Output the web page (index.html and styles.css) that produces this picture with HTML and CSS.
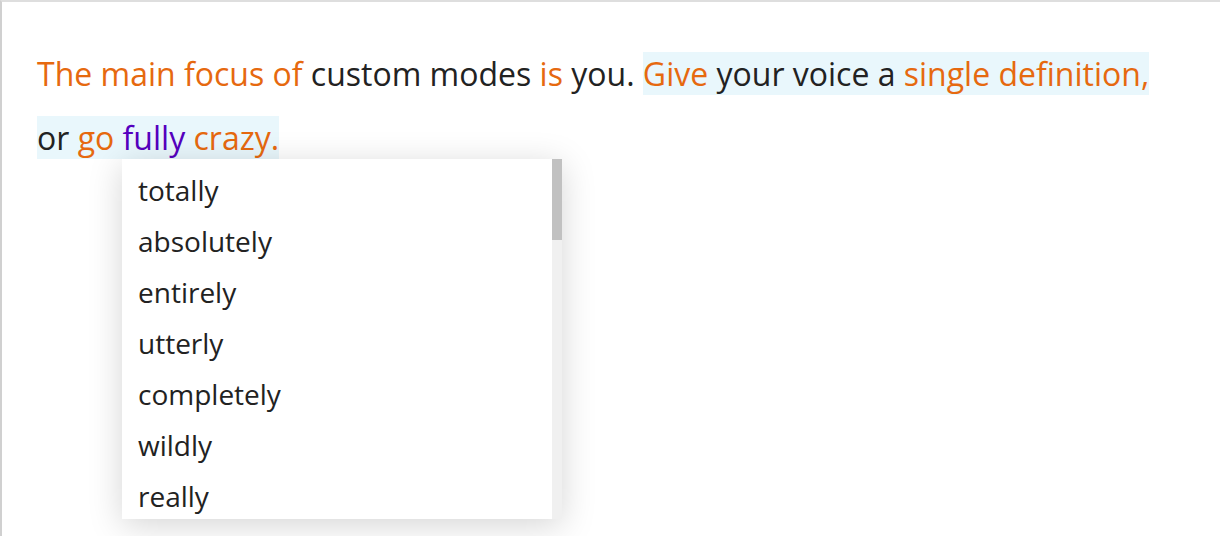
FILE: index.html
```html
<!DOCTYPE html>
<html lang="en">
<head>
<meta charset="utf-8">
<title>Custom modes</title>
<link rel="stylesheet" href="styles.css">
</head>
<body>
<div class="editor">
  <p class="text"><span class="o">The main focus of</span> custom modes <span class="o">is</span> you. <span class="hl"><span class="o">Give</span> your voice a <span class="o">single definition,</span> or <span class="o">go</span> <span class="p">fully</span> <span class="o">crazy.</span></span></p>
  <div class="menu">
    <ul class="options">
      <li>totally</li>
      <li>absolutely</li>
      <li>entirely</li>
      <li>utterly</li>
      <li>completely</li>
      <li>wildly</li>
      <li>really</li>
    </ul>
    <div class="scrollbar"><div class="thumb"></div></div>
  </div>
</div>
</body>
</html>
```
FILE: styles.css
```css
html, body {
  margin: 0;
  padding: 0;
  background: #fff;
}
body {
  width: 1220px;
  height: 536px;
  overflow: hidden;
}
.editor {
  position: relative;
  box-sizing: border-box;
  height: 536px;
  border-top: 2px solid #dedede;
  border-left: 2px solid #d0d0d0;
  padding: 40px 40px 0 35px;
  font-family: "Open Sans", "Noto Sans", sans-serif;
  color: #222;
}
.text {
  margin: 0;
  font-size: 32px;
  line-height: 64px;
}
.o { color: #e6690f; }
.p { color: #5500bf; }
.hl { background: #e9f7fc; }
.menu {
  position: absolute;
  top: 157px;
  left: 120px;
  width: 440px;
  height: 360px;
  display: flex;
  background: #fff;
  box-shadow: 0 6px 32px rgba(0, 0, 0, 0.17);
  z-index: 2;
}
.options {
  flex: 1;
  list-style: none;
  margin: 0;
  padding: 6px 0 0;
  overflow: hidden;
}
.options li {
  height: 51px;
  line-height: 51px;
  padding: 0 16px;
  font-size: 28px;
  color: #222;
}
.scrollbar {
  width: 10px;
  background: #f0f0f0;
  display: flex;
  flex-direction: column;
}
.thumb {
  height: 81px;
  background: #c1c1c1;
}
```
